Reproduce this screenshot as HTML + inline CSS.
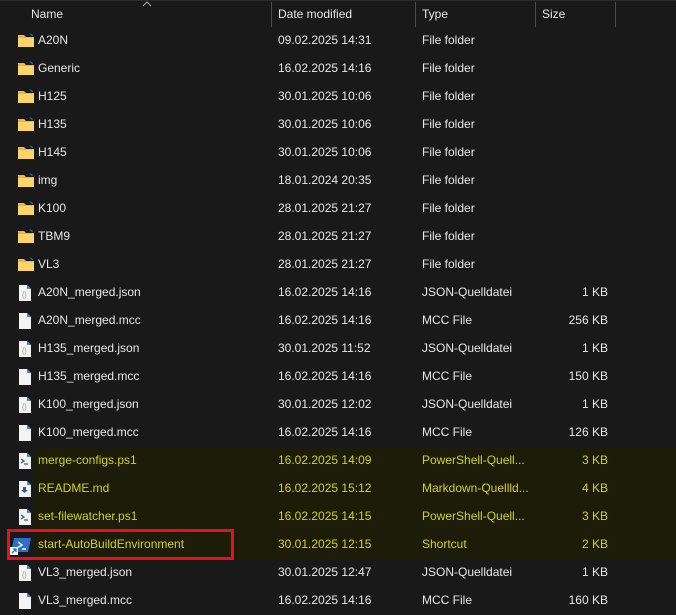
<!DOCTYPE html>
<html><head><meta charset="utf-8"><style>
html,body{margin:0;padding:0;background:#191919;width:676px;height:611px;overflow:hidden;font-family:"Segoe UI","Liberation Sans",sans-serif;font-size:12px;color:#e8e8e8}
.hdr{position:absolute;left:0;top:0;width:676px;height:27px;border-top:1px solid #2b2b2b}
.hdr span{position:absolute;top:6px}
.sep{position:absolute;top:1px;width:1px;height:25px;background:#4a4a4a}
.row{position:absolute;left:0;width:676px;height:28px}
.row span{position:absolute;top:6px;white-space:nowrap}
.hl{background:#1c1c09}
.hl span{color:#d2d21e}
.ic{position:absolute;left:18px;top:6px}
.n{left:38px}.d{left:278px}.t{left:422px}.s{right:68px;text-align:right}
</style></head><body>
<div class="hdr">
<span style="left:31px">Name</span>
<svg style="position:absolute;left:142px;top:0" width="10" height="6"><path d="M1 5 L5 1 L9 5" stroke="#aaa" fill="none"/></svg>
<div class="sep" style="left:271px"></div><span style="left:278px">Date modified</span>
<div class="sep" style="left:415px"></div><span style="left:422px">Type</span>
<div class="sep" style="left:535px"></div><span style="left:542px">Size</span>
<div class="sep" style="left:615px"></div>
</div>
<div id="rows"></div>
<div style="position:absolute;left:7px;top:529px;width:221px;height:25px;border:3px solid #e8101a"></div>
<script>
const F='<svg class="ic" width="16" height="14"><path d="M0 2h6l2 2h8v10H0z" fill="#e8b64a"/><path d="M0 5h16v9H0z" fill="#fbd46a"/><path d="M11 0l4 2-1 1z" fill="#3a8ee6"/></svg>';
const D='<svg class="ic" width="14" height="16"><path d="M1 0h8l4 4v12H1z" fill="#f4f4f4"/><path d="M9 0v4h4z" fill="#3a8ee6"/></svg>';
const J='<svg class="ic" width="14" height="16"><path d="M1 0h8l4 4v12H1z" fill="#f4f4f4"/><path d="M9 0v4h4z" fill="#3a8ee6"/><text x="4" y="12" font-size="7" fill="#b8a040">{}</text></svg>';
const P='<svg class="ic" width="14" height="16"><path d="M1 0h8l4 4v12H1z" fill="#f4f4f4"/><path d="M9 0v4h4z" fill="#3a8ee6"/><path d="M3 6l3 2-3 2M6 11h4" stroke="#2c5aa0" stroke-width="1.3" fill="none"/></svg>';
const M='<svg class="ic" width="14" height="16"><path d="M1 0h8l4 4v12H1z" fill="#f4f4f4"/><path d="M9 0v4h4z" fill="#3a8ee6"/><path d="M5 6h3v3h2l-3.5 3L3 9h2z" fill="#2c5aa0"/></svg>';
const S='<svg class="ic" style="left:10px" width="22" height="18"><path d="M4 1h17l-3 14H1z" fill="#2d6fc8"/><path d="M8 5l4 3-5 3M12 12h4" stroke="#fff" stroke-width="1.4" fill="none"/><rect x="0" y="10" width="8" height="8" fill="#fff"/><path d="M2 16l4-4M3 12h3v3" stroke="#2d6fc8" stroke-width="1.3" fill="none"/></svg>';
const R=[
[F,'A20N','09.02.2025 14:31','File folder',''],
[F,'Generic','16.02.2025 14:16','File folder',''],
[F,'H125','30.01.2025 10:06','File folder',''],
[F,'H135','30.01.2025 10:06','File folder',''],
[F,'H145','30.01.2025 10:06','File folder',''],
[F,'img','18.01.2024 20:35','File folder',''],
[F,'K100','28.01.2025 21:27','File folder',''],
[F,'TBM9','28.01.2025 21:27','File folder',''],
[F,'VL3','28.01.2025 21:27','File folder',''],
[J,'A20N_merged.json','16.02.2025 14:16','JSON-Quelldatei','1 KB'],
[D,'A20N_merged.mcc','16.02.2025 14:16','MCC File','256 KB'],
[J,'H135_merged.json','30.01.2025 11:52','JSON-Quelldatei','1 KB'],
[D,'H135_merged.mcc','16.02.2025 14:16','MCC File','150 KB'],
[J,'K100_merged.json','30.01.2025 12:02','JSON-Quelldatei','1 KB'],
[D,'K100_merged.mcc','16.02.2025 14:16','MCC File','126 KB'],
[P,'merge-configs.ps1','16.02.2025 14:09','PowerShell-Quell...','3 KB',1],
[M,'README.md','16.02.2025 15:12','Markdown-Quellld...','4 KB',1],
[P,'set-filewatcher.ps1','16.02.2025 14:15','PowerShell-Quell...','3 KB',1],
[S,'start-AutoBuildEnvironment','30.01.2025 12:15','Shortcut','2 KB',1],
[J,'VL3_merged.json','30.01.2025 12:47','JSON-Quelldatei','1 KB'],
[D,'VL3_merged.mcc','16.02.2025 14:16','MCC File','160 KB']];
let h='';R.forEach((r,i)=>{const y=27+28*i;
h+=`<div class="row${r[5]?' hl':''}" style="top:${y}px">${r[5]?'<div style="position:absolute;left:0;top:0;width:33px;height:28px;background:#191919"></div>':''}${r[0]}<span class="n">${r[1]}</span><span class="d">${r[2]}</span><span class="t">${r[3]}</span><span class="s">${r[4]}</span></div>`;});
document.getElementById('rows').innerHTML=h;
</script>
</body></html>
